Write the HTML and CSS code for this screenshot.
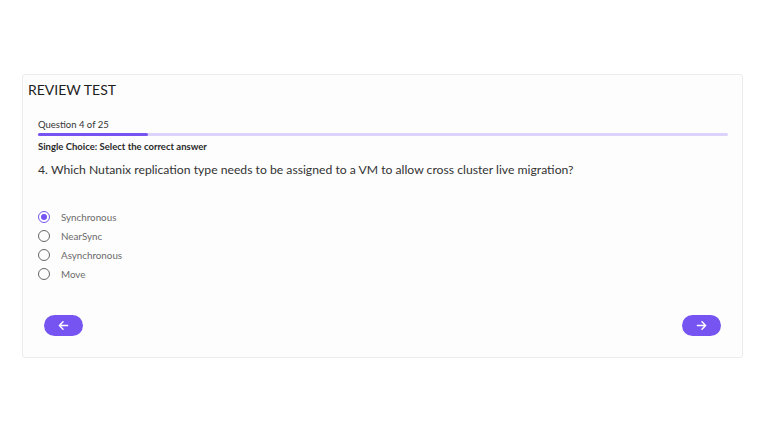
FILE: index.html
```html
<!DOCTYPE html>
<html lang="en">
<head>
    <meta charset="UTF-8">
    <meta name="viewport" content="width=device-width, initial-scale=1.0">
    <title>Review Test</title>
    <link rel="stylesheet" href="styles.css">
</head>
<body>
    <div class="card">
        <h1 class="title">REVIEW TEST</h1>

        <div class="quiz">
            <div class="counter">Question 4 of 25</div>
            <div class="progress">
                <div class="progress-fill" style="width: 16%;"></div>
            </div>
            <div class="hint">Single Choice: Select the correct answer</div>
            <p class="question">4. Which Nutanix replication type needs to be assigned to a VM to allow cross cluster live migration?</p>

            <div class="options">
                <label class="option">
                    <input type="radio" name="answer" checked>
                    <span class="radio"></span>
                    Synchronous
                </label>
                <label class="option">
                    <input type="radio" name="answer">
                    <span class="radio"></span>
                    NearSync
                </label>
                <label class="option">
                    <input type="radio" name="answer">
                    <span class="radio"></span>
                    Asynchronous
                </label>
                <label class="option">
                    <input type="radio" name="answer">
                    <span class="radio"></span>
                    Move
                </label>
            </div>
        </div>

        <div class="nav">
            <button class="nav-btn" aria-label="Previous">
                <svg width="11" height="11" viewBox="0 0 12 12" fill="none" stroke="#fff" stroke-width="1.6" stroke-linecap="round" stroke-linejoin="round">
                    <path d="M10.5 6H1.5M5.5 2L1.5 6L5.5 10"/>
                </svg>
            </button>
            <button class="nav-btn" aria-label="Next">
                <svg width="11" height="11" viewBox="0 0 12 12" fill="none" stroke="#fff" stroke-width="1.6" stroke-linecap="round" stroke-linejoin="round">
                    <path d="M1.5 6H10.5M6.5 2L10.5 6L6.5 10"/>
                </svg>
            </button>
        </div>
    </div>
</body>
</html>
```

FILE: styles.css
```css
body {
    margin: 0;
    font-family: 'Lato', 'Open Sans', sans-serif;
    background-color: #fff;
}

.card {
    margin: 74px 0 0 22px;
    width: 721px;
    box-sizing: border-box;
    border: 1px solid #ececec;
    border-radius: 3px;
    background-color: #fdfdfd;
    padding: 0 0 21px 0;
}

.title {
    margin: 0;
    padding: 5px 0 1px 5px;
    font-size: 14px;
    font-weight: 400;
    line-height: 20px;
    color: #1e1e1e;
}

.quiz {
    padding: 0 14px 0 15px;
    margin-top: 18px;
}

.counter {
    font-size: 9.5px;
    line-height: 12px;
    color: #333;
}

.progress {
    margin-top: 2px;
    height: 3px;
    background-color: #dcd3fc;
    border-radius: 2px;
}

.progress-fill {
    height: 100%;
    background-color: #7654f2;
    border-radius: 2px;
}

.hint {
    margin-top: 5px;
    font-size: 9.5px;
    line-height: 12px;
    font-weight: 700;
    color: #2a2a2a;
}

.question {
    margin: 8px 0 0 0;
    font-size: 12.2px;
    line-height: 18px;
    color: #333;
}

.options {
    margin-top: 28px;
    display: flex;
    flex-direction: column;
}

.option {
    display: flex;
    align-items: center;
    height: 19px;
    font-size: 9.8px;
    color: #6a6a6a;
    cursor: pointer;
}

.option input {
    display: none;
}

.radio {
    width: 12px;
    height: 12px;
    box-sizing: border-box;
    border: 1.5px solid #666;
    border-radius: 50%;
    margin-right: 11px;
    display: flex;
    align-items: center;
    justify-content: center;
}

.option input:checked + .radio {
    border-color: #7654f2;
}

.option input:checked + .radio:after {
    content: "";
    width: 6px;
    height: 6px;
    border-radius: 50%;
    background-color: #7654f2;
}

.nav {
    margin-top: 32px;
    padding: 0 21px;
    display: flex;
    justify-content: space-between;
}

.nav-btn {
    width: 39px;
    height: 21px;
    border: none;
    border-radius: 11px;
    background-color: #7654f2;
    display: flex;
    align-items: center;
    justify-content: center;
    padding: 0;
    cursor: pointer;
}
```
